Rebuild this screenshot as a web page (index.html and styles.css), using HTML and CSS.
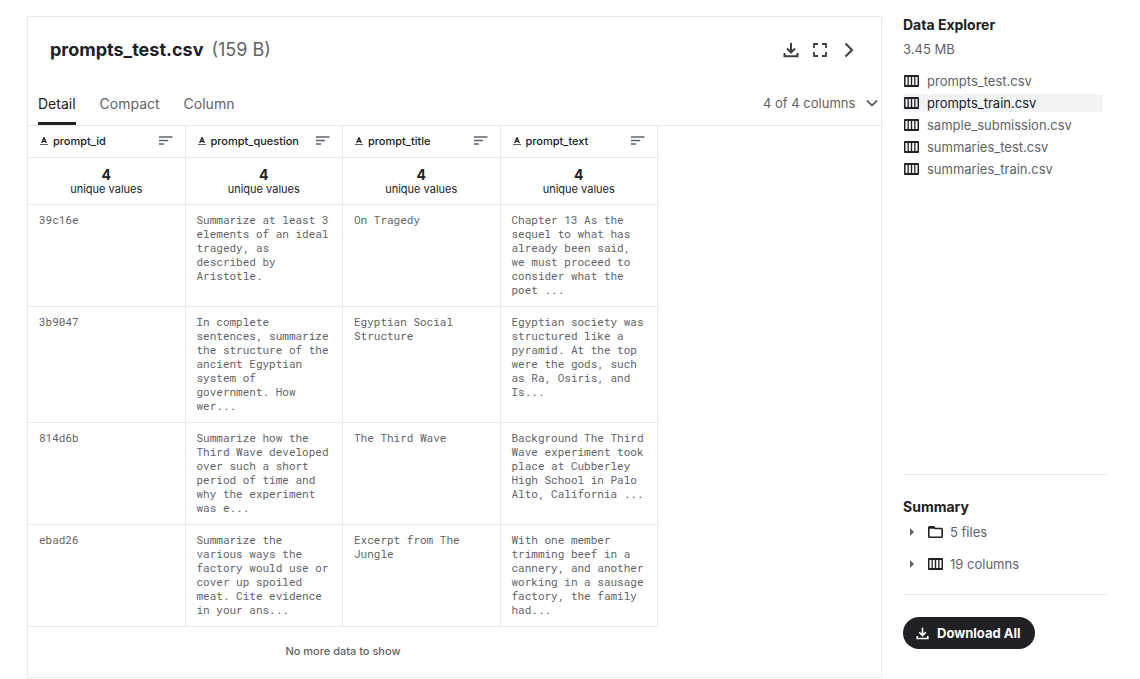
FILE: index.html
```html
<!DOCTYPE html>
<html lang="en">
<head>
  <meta charset="UTF-8">
  <meta name="viewport" content="width=device-width, initial-scale=1">
  <title>prompts_test.csv</title>
  <link rel="stylesheet" href="styles.css">
</head>
<body>
  <svg class="sprite" aria-hidden="true">
    <symbol id="icon-download" viewBox="0 0 16 16">
      <path d="M8 1v9M4 6.5l4 4 4-4M1.500 11v3.200h13V11" fill="none" stroke="currentColor" stroke-width="2"/>
    </symbol>
    <symbol id="icon-columns" viewBox="0 0 15 12">
      <path d="M1 0h13a1 1 0 0 1 1 1v10a1 1 0 0 1-1 1H1a1 1 0 0 1-1-1V1a1 1 0 0 1 1-1zM1.500 2v8h2V2zM4.800 2v8h2V2zM8.200 2v8h2V2zM11.500 2v8h2V2z" fill="currentColor" fill-rule="evenodd"/>
    </symbol>
    <symbol id="icon-text" viewBox="0 0 8 8">
      <path d="M1.700 6L4 .6 6.300 6M2.500 4.400h3" fill="none" stroke="#202124" stroke-width="1.300"/>
      <path d="M0 7.500h8" stroke="#5f6368"/>
    </symbol>
    <symbol id="icon-sort" viewBox="0 0 14 9">
      <path d="M0 1h13.500M0 4.500h9M0 8h5" fill="none" stroke="currentColor" stroke-width="1.400"/>
    </symbol>
  </svg>

  <div class="explorer">
    <main class="panel">
      <div class="panel-header">
        <h1 class="file-title">prompts_test.csv <span class="file-size">(159 B)</span></h1>
        <div class="file-actions">
          <button class="icon-btn" type="button" aria-label="Download"><svg width="16" height="16"><use href="#icon-download"/></svg></button>
          <button class="icon-btn" type="button" aria-label="Fullscreen">
            <svg width="16" height="16" viewBox="0 0 16 16"><path d="M2 6V2h4M10 2h4v4M14 10v4h-4M6 14H2v-4" fill="none" stroke="currentColor" stroke-width="1.800"/></svg>
          </button>
          <button class="icon-btn" type="button" aria-label="Next file">
            <svg width="16" height="16" viewBox="0 0 16 16"><path d="M4.500 1.500L11 8l-6.500 6.500" fill="none" stroke="currentColor" stroke-width="2"/></svg>
          </button>
        </div>
      </div>

      <div class="toolbar">
        <div class="tabs" role="tablist">
          <button class="tab tab-active" type="button" role="tab" aria-selected="true">Detail</button>
          <button class="tab" type="button" role="tab" aria-selected="false">Compact</button>
          <button class="tab" type="button" role="tab" aria-selected="false">Column</button>
        </div>
        <div class="column-picker">
          <select class="column-select" aria-label="Visible columns">
            <option>4 of 4 columns</option>
          </select>
          <svg width="12" height="8" viewBox="0 0 12 8"><path d="M1 1.500l5 5 5-5" fill="none" stroke="currentColor" stroke-width="1.800"/></svg>
        </div>
      </div>

      <table class="data-table">
        <thead>
          <tr>
            <th><div class="col-head"><svg width="8" height="8"><use href="#icon-text"/></svg><span class="col-name">prompt_id</span><button class="sort-btn" type="button" aria-label="Sort prompt_id"><svg width="14" height="9"><use href="#icon-sort"/></svg></button></div></th>
            <th><div class="col-head"><svg width="8" height="8"><use href="#icon-text"/></svg><span class="col-name">prompt_question</span><button class="sort-btn" type="button" aria-label="Sort prompt_question"><svg width="14" height="9"><use href="#icon-sort"/></svg></button></div></th>
            <th><div class="col-head"><svg width="8" height="8"><use href="#icon-text"/></svg><span class="col-name">prompt_title</span><button class="sort-btn" type="button" aria-label="Sort prompt_title"><svg width="14" height="9"><use href="#icon-sort"/></svg></button></div></th>
            <th><div class="col-head"><svg width="8" height="8"><use href="#icon-text"/></svg><span class="col-name">prompt_text</span><button class="sort-btn" type="button" aria-label="Sort prompt_text"><svg width="14" height="9"><use href="#icon-sort"/></svg></button></div></th>
          </tr>
        </thead>
        <tbody>
          <tr class="stats-row">
            <td><strong>4</strong>unique values</td>
            <td><strong>4</strong>unique values</td>
            <td><strong>4</strong>unique values</td>
            <td><strong>4</strong>unique values</td>
          </tr>
          <tr>
            <td>39c16e</td>
            <td>Summarize at least 3 elements of an ideal tragedy, as described by Aristotle.</td>
            <td>On Tragedy</td>
            <td>Chapter 13 As the sequel to what has already been said, we must proceed to consider what the poet ...</td>
          </tr>
          <tr>
            <td>3b9047</td>
            <td>In complete sentences, summarize the structure of the ancient Egyptian system of government. How wer...</td>
            <td>Egyptian Social Structure</td>
            <td>Egyptian society was structured like a pyramid. At the top were the gods, such as Ra, Osiris, and Is...</td>
          </tr>
          <tr>
            <td>814d6b</td>
            <td>Summarize how the Third Wave developed over such a short period of time and why the experiment was e...</td>
            <td>The Third Wave</td>
            <td>Background The Third Wave experiment took place at Cubberley High School in Palo Alto, California ...</td>
          </tr>
          <tr>
            <td>ebad26</td>
            <td>Summarize the various ways the factory would use or cover up spoiled meat. Cite evidence in your ans...</td>
            <td>Excerpt from The Jungle</td>
            <td>With one member trimming beef in a cannery, and another working in a sausage factory, the family had...</td>
          </tr>
        </tbody>
      </table>
      <div class="table-end">No more data to show</div>
    </main>

    <aside class="sidebar">
      <h2 class="side-title">Data Explorer</h2>
      <div class="total-size">3.45 MB</div>
      <nav class="file-list">
        <a class="file-link" href="#"><svg width="15" height="12"><use href="#icon-columns"/></svg>prompts_test.csv</a>
        <a class="file-link file-hover" href="#"><svg width="15" height="12"><use href="#icon-columns"/></svg>prompts_train.csv</a>
        <a class="file-link" href="#"><svg width="15" height="12"><use href="#icon-columns"/></svg>sample_submission.csv</a>
        <a class="file-link" href="#"><svg width="15" height="12"><use href="#icon-columns"/></svg>summaries_test.csv</a>
        <a class="file-link" href="#"><svg width="15" height="12"><use href="#icon-columns"/></svg>summaries_train.csv</a>
      </nav>

      <section class="summary">
        <h2 class="side-title">Summary</h2>
        <button class="summary-item" type="button" aria-expanded="false">
          <svg class="caret" width="4" height="8" viewBox="0 0 4 8"><path d="M0 0l4 4-4 4z" fill="currentColor"/></svg>
          <svg class="summary-icon" width="15" height="12" viewBox="0 0 15 12"><path d="M1.500 .8h4.200l1.500 1.700h6.300q.7 0 .7.700v7.300q0 .7-.7.700h-12q-.7 0-.7-.7V1.500q0-.7.7-.7zM1 2h6" fill="none" stroke="currentColor" stroke-width="1.600"/></svg>
          5 files
        </button>
        <button class="summary-item" type="button" aria-expanded="false">
          <svg class="caret" width="4" height="8" viewBox="0 0 4 8"><path d="M0 0l4 4-4 4z" fill="currentColor"/></svg>
          <svg class="summary-icon" width="15" height="12"><use href="#icon-columns"/></svg>
          19 columns
        </button>
      </section>

      <button class="download-btn" type="button"><svg width="13" height="13"><use href="#icon-download"/></svg>Download All</button>
    </aside>
  </div>
</body>
</html>
```
FILE: styles.css
```css
* {
  box-sizing: border-box;
}
body {
  margin: 0;
  background: #fff;
  color: #202124;
  font-family: Inter, Arial, sans-serif;
  font-size: 13px;
}
button, select {
  font: inherit;
  color: inherit;
  background: none;
  border: none;
  padding: 0;
  cursor: pointer;
}
svg {
  display: block;
  flex-shrink: 0;
}
.sprite {
  position: absolute;
  width: 0;
  height: 0;
}
.explorer {
  display: flex;
  gap: 21px;
  padding: 16px 33px 1px 27px;
}

/* file panel */
.panel {
  flex: 1;
  min-width: 0;
  border: 1px solid #e8eaed;
}
.panel-header {
  display: flex;
  align-items: center;
  justify-content: space-between;
  padding: 21px 24px 19px 22px;
}
.file-title {
  display: flex;
  gap: 8px;
  margin: 0;
  font-size: 18px;
  line-height: 24px;
  font-weight: 700;
}
.file-size {
  font-weight: 400;
  color: #5f6368;
}
.file-actions {
  display: flex;
  gap: 13px;
  color: #3c4043;
}
.toolbar {
  display: flex;
  align-items: stretch;
  justify-content: space-between;
  height: 44px;
  padding: 0 3px 0 10px;
  color: #5f6368;
}
.tabs {
  display: flex;
  gap: 24px;
}
.tab {
  padding-top: 4px;
  border-bottom: 3px solid transparent;
  font-size: 14px;
}
.tab-active {
  color: #202124;
  border-color: #202124;
  border-radius: 2px 2px 0 0;
}
.column-picker {
  display: flex;
  align-items: center;
  gap: 10px;
}
.column-select {
  appearance: none;
  font-size: 13px;
}

/* table */
.data-table {
  width: 630px;
  max-width: 100%;
  table-layout: fixed;
  border-collapse: separate;
  border-spacing: 0;
  border-top: 1px solid #e8eaed;
}
.data-table th,
.data-table td {
  border-right: 1px solid #e8eaed;
  border-bottom: 1px solid #e8eaed;
  text-align: left;
  vertical-align: top;
}
.data-table th {
  height: 32px;
  padding: 0 12px 2px;
  vertical-align: middle;
  font-size: 11px;
  font-weight: 500;
}
.data-table td {
  padding: 8px 12px 9px 11px;
  font-family: "Roboto Mono", "Liberation Mono", monospace;
  font-size: 11px;
  line-height: 14px;
  color: #5f6368;
}
.col-head {
  display: flex;
  align-items: center;
  gap: 5px;
}
.col-name {
  flex: 1;
}
.sort-btn {
  color: #5f6368;
}
.data-table .stats-row td {
  padding: 9px 0 7px;
  font-family: inherit;
  line-height: 15px;
  text-align: center;
  color: #202124;
}
.stats-row strong {
  display: block;
  font-size: 14px;
}
.table-end {
  width: 630px;
  max-width: 100%;
  padding: 16px 0 18px;
  font-size: 11px;
  line-height: 16px;
  font-weight: 500;
  text-align: center;
  color: #5f6368;
}

/* the rule under the tabs runs across the whole panel */
.toolbar {
  box-shadow: 0 1px 0 #e8eaed;
}

/* sidebar */
.sidebar {
  display: flex;
  flex-direction: column;
  align-items: stretch;
  width: 204px;
  padding-bottom: 29px;
}
.side-title {
  margin: 0;
  font-size: 14px;
  line-height: 18px;
  font-weight: 700;
}
.total-size {
  margin-top: 6px;
  line-height: 18px;
  color: #5f6368;
}
.file-list {
  display: flex;
  flex-direction: column;
  gap: 4px;
  margin: 14px 4px 0 0;
}
.file-link {
  display: flex;
  align-items: center;
  gap: 8px;
  padding-left: 1px;
  line-height: 18px;
  color: #5f6368;
  text-decoration: none;
}
.file-link svg,
.summary-icon {
  color: #202124;
}
.file-hover,
.file-link:hover {
  background: #f1f3f4;
  color: #202124;
}
.summary {
  display: flex;
  flex-direction: column;
  align-items: flex-start;
  margin-top: auto;
  padding: 23px 0 14px;
  border-top: 1px solid #e8eaed;
  border-bottom: 1px solid #e8eaed;
}
.summary-item {
  display: flex;
  align-items: center;
  gap: 7px;
  height: 32px;
  padding-left: 7px;
  color: #5f6368;
}
.caret {
  margin-right: 7px;
}
.download-btn {
  display: flex;
  align-items: center;
  align-self: flex-start;
  gap: 8px;
  height: 32px;
  margin-top: 22px;
  padding: 0 14px 0 13px;
  border-radius: 16px;
  background: #202124;
  color: #fff;
  font-weight: 700;
}
```
